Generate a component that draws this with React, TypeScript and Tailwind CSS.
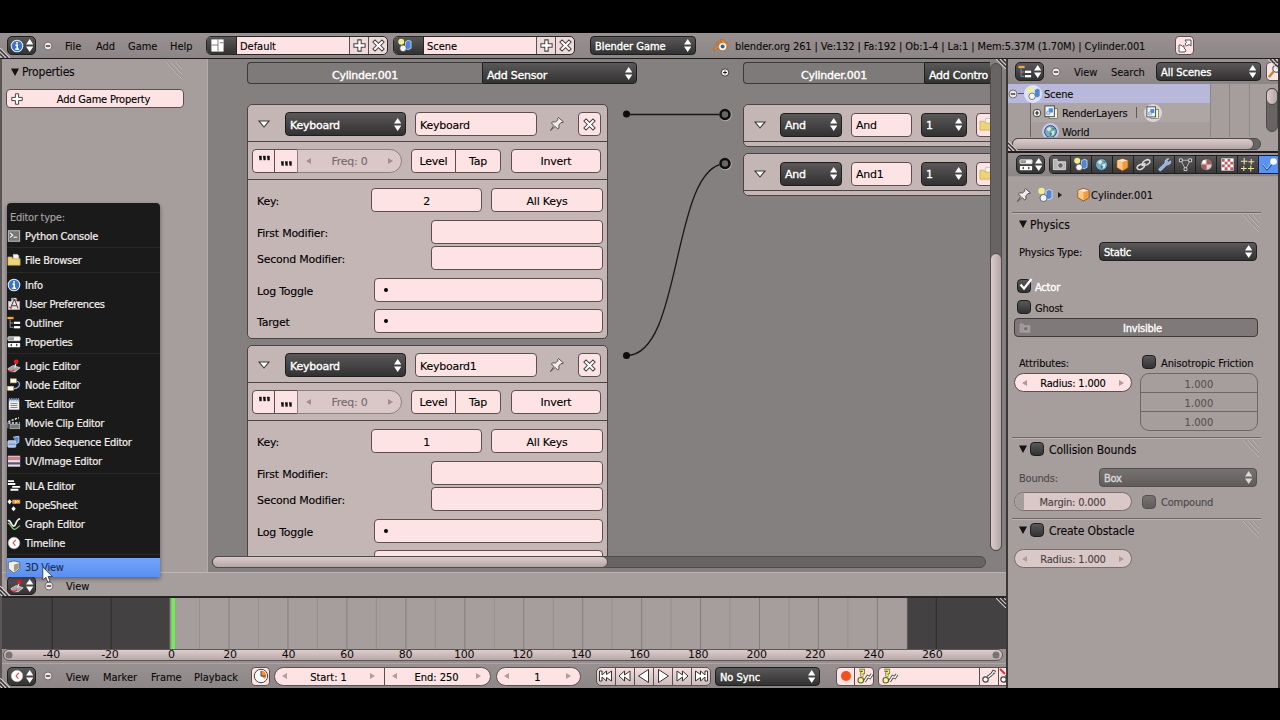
import type { ReactNode } from 'react';
import clsx from 'clsx';

const DARK = 'bg-linear-to-b from-[#5a5858] to-[#333232] border border-[#1f1e1e] text-white';
const PINK = 'bg-[#fde3e3] border border-[#5b4f4f] text-black';
const LOGIC_TEXT = "[font-family:'DejaVu_Sans',sans-serif] tracking-[-0.25px] [&_span]:pt-[2px]";
const HEADER_TEXT = 'tracking-[-0.03px] [&_span]:pt-[2px]';
const GLOW = '[-webkit-text-stroke:0.35px_#fff]';

const ICONS: Record<string, ReactNode> = {
  info: (
    <>
      <circle cx="8" cy="8" r="6.6" fill="#3b74c4" stroke="#e4eefb" strokeWidth="1.2" />
      <path d="M8 3.4v2M6.3 7h1.9v4.6M6 11.7h4.2" stroke="#fff" strokeWidth="1.8" fill="none" />
    </>
  ),
  console: (
    <>
      <rect x="1.5" y="2" width="13" height="12" fill="#777" stroke="#ccc" />
      <path d="M3.5 4.5l3 2.5-3 2.5M7.5 9.5h4" stroke="#fff" strokeWidth="1.2" fill="none" />
    </>
  ),
  folder: (
    <>
      <path d="M7 1.5h5l1.5 1.5v6H7z" fill="#f3f3ee" stroke="#aaa" strokeWidth=".6" />
      <path d="M1 4.5h4.5l1 2H15V14H1z" fill="#ecd37c" stroke="#c8a74a" strokeWidth=".7" />
    </>
  ),
  prefs: (
    <>
      <rect x="1.5" y="5" width="13" height="9.5" fill="#eadfe2" stroke="#b9a9ad" strokeWidth=".7" />
      <path d="M5 1h6v5H5z" fill="#eadfe2" />
      <path d="M4 13l3.5-9h1.7l3.3 9M5.5 10h5.5M6 2l4 1.5M11 1l1.5 2.5" stroke="#433" strokeWidth="1.1" fill="none" />
      <path d="M2.5 11.5l3 1.5" stroke="#d0405a" strokeWidth="1.3" />
    </>
  ),
  outliner: (
    <>
      <rect x=".5" y="1" width="7" height="2.6" fill="#f0a848" />
      <path d="M3.5 4v9h4M3.5 8h4" stroke="#8494b0" strokeWidth="1.1" fill="none" />
      <rect x="8" y="6.5" width="7" height="2.6" fill="#fff" />
      <rect x="8" y="11.5" width="7" height="2.6" fill="#fff" />
    </>
  ),
  properties: (
    <>
      <rect x="1" y="2" width="14" height="4.5" rx="1" fill="#999" stroke="#fff" strokeWidth=".8" />
      <rect x="8" y="2.5" width="6.5" height="3.5" fill="#fff" />
      <rect x="1" y="9" width="14" height="5" rx="1" fill="#fff" />
      <path d="M5.5 9.8L3.5 11.5l2 1.7zM10.5 9.8l2 1.7-2 1.7z" fill="#222" />
    </>
  ),
  logic: (
    <>
      <path d="M1 11l6-3.5 8 2.5-5.5 4.5H4z" fill="#aaa2a2" stroke="#eee" strokeWidth=".8" />
      <path d="M1 13l4 1.5 3-2" stroke="#c33" strokeWidth="1.4" fill="none" />
      <path d="M9 10l1.2-6" stroke="#ddd" strokeWidth="1.5" />
      <circle cx="10.5" cy="3.2" r="2.7" fill="#e2202a" />
    </>
  ),
  node: (
    <>
      <rect x="4" y="1" width="6.5" height="4.5" fill="#fff" stroke="#d8c48c" strokeWidth=".8" />
      <rect x=".8" y="9.5" width="6.5" height="4.5" fill="#fff" stroke="#d8c48c" strokeWidth=".8" />
      <path d="M10.5 3.500c5.500.5 5.500 8-3 8.700" stroke="#92abdc" strokeWidth="1.5" fill="none" />
    </>
  ),
  text: (
    <>
      <rect x="2" y="3" width="12" height="11.5" fill="#f2f2f2" />
      <path d="M3 1v4M5.5 1v4M8 1v4M10.5 1v4M13 1v4" stroke="#7c9ddb" strokeWidth="1.3" />
      <path d="M4 7.5h8M4 9.7h8M4 12h8" stroke="#777" strokeWidth="1" />
    </>
  ),
  clip: (
    <>
      <path d="M1.5 6.5L13.5 2" stroke="#eee" strokeWidth="1.6" strokeDasharray="2.5 1.5" />
      <path d="M1.5 8h13" stroke="#eee" strokeWidth="1.6" strokeDasharray="2.5 1.5" />
      <path d="M1 7v7" stroke="#6b93cf" strokeWidth="1.2" />
      <rect x="3.5" y="9.5" width="11" height="5" fill="#777" stroke="#b8c6bd" strokeWidth=".8" />
    </>
  ),
  sequence: (
    <>
      <path d="M7 2.5l6.5-1v7l-3 1.5" fill="#5c86c6" stroke="#c4daf6" strokeWidth="1" />
      <rect x="1" y="6.5" width="9" height="7.5" rx="1" fill="#a6c6f0" stroke="#dceafb" strokeWidth=".8" />
      <path d="M1.5 10.5h8" stroke="#5f87c4" />
    </>
  ),
  image: (
    <>
      <rect x="1" y="2" width="14" height="12.5" fill="#f1d9dd" />
      <rect x="1" y="3" width="14" height="4" fill="#cf7d88" />
      <rect x="1" y="9.5" width="14" height="2.5" fill="#4b5687" />
    </>
  ),
  nla: <path d="M1 2.5h7M1 5.7h8.5M6 9h9M4 12.3h9" stroke="#fff" strokeWidth="2.1" />,
  dope: (
    <>
      <rect x="6" y="2" width="9" height="4.5" fill="#e79a3e" />
      <path d="M3 1.500l2.500 2.800L3 7 .5 4.300zM7.500 9.500l2.500 2.800-2.500 2.700L5 12.300z" fill="#fff" />
      <path d="M9 3l2 1.5L9 6M12 3l2 1.500" stroke="#fff" fill="none" />
    </>
  ),
  graph: (
    <>
      <path d="M1 4.500c3-2 4 6 6.500 6C11 11 9 3 15 2" stroke="#f2f2f2" strokeWidth="2" fill="none" />
      <path d="M1 7c3 0 4 6 7 7s4-3 7-4" stroke="#8ed07a" strokeWidth="1.3" fill="none" />
    </>
  ),
  clock: (
    <>
      <circle cx="8" cy="8" r="6.6" fill="#fff" stroke="#bbb" strokeWidth=".6" />
      <path d="M10 4.5L7 8l2.5 3" stroke="#d14b52" strokeWidth="1.3" fill="none" />
    </>
  ),
  view3d: (
    <>
      <path d="M1.5 2.5L8 1l6.500 1.500v7.500L8 15l-6.500-5z" fill="#f0efe4" stroke="#555" strokeWidth=".9" />
      <path d="M8 5.500l5.500-2v6L8 13.500z" fill="#9b998c" />
    </>
  ),
  scene: (
    <>
      <circle cx="4.5" cy="4" r="3.2" fill="#eeee8e" />
      <path d="M9 4l3-1.500 3 1v7.500l-3 1.500-3-1z" fill="#4e86d8" stroke="#dbe8fa" strokeWidth=".8" />
      <circle cx="6.5" cy="11" r="3.5" fill="#f4f4f4" stroke="#444" strokeWidth=".7" />
    </>
  ),
  layers: (
    <>
      <rect x="5.5" y="4" width="9" height="10.5" fill="#f6f3cf" stroke="#555" strokeWidth=".7" />
      <rect x="1" y="1" width="10" height="11.5" fill="#eef4fc" stroke="#333" strokeWidth=".9" />
      <path d="M5 3.5h4.500V8H5z" fill="#4b8be0" />
      <circle cx="4.5" cy="8.5" r="2" fill="#c6d7ec" stroke="#678" strokeWidth=".5" />
    </>
  ),
  world: (
    <>
      <circle cx="8" cy="8" r="6.3" fill="#79a9c9" stroke="#244456" strokeWidth=".9" />
      <path d="M3.5 5.5L7 3l2 2-2.500 3zM9 8l3.500-1-1 4.500-2.500 1z" fill="#d7ecd4" />
      <path d="M9 5l3-1 .5 2zM7 9l3 1-2 3z" fill="#3f8266" />
    </>
  ),
  camera: (
    <>
      <path d="M1.500 5V2.500h4V5H14.500v8.500h-13z" fill="#b9b4b4" stroke="#e3dfdf" strokeWidth=".9" />
      <circle cx="9" cy="9" r="3" fill="#666" stroke="#eee" strokeWidth=".9" />
    </>
  ),
  cube: (
    <>
      <path d="M8 1.500l6 2v8l-6 3.500-6-3.500v-8z" fill="#ef9d3c" stroke="#8d4b0c" strokeWidth=".8" />
      <path d="M2.500 3.800L8 5.500v8.500l-5.500-3z" fill="#fbc987" />
      <path d="M2.500 3.600L8 2l5.500 1.600L8 5.300z" fill="#ffe9c8" />
    </>
  ),
  link: (
    <g fill="none" stroke="#ddd" strokeWidth="1.6">
      <ellipse cx="5" cy="10.5" rx="4" ry="2.5" transform="rotate(-25 5 10.5)" />
      <ellipse cx="11" cy="5.8" rx="4" ry="2.5" transform="rotate(-25 11 5.8)" />
      <path d="M6 9.5l4-3" />
    </g>
  ),
  wrench: (
    <path
      d="M2 12.500L8.500 6.500C8 3.500 10 1.500 12.700 1.700L10.800 4l1.200 1.500 2.700-1.300c.3 2.800-1.700 4.500-4.300 4.300L4.500 14.500c-1.500 1-3.200-.5-2.500-2z"
      fill="#8fb4ea"
      stroke="#d0e0f5"
      strokeWidth=".6"
    />
  ),
  mesh: (
    <>
      <path d="M3 3.5h10L8 13z" stroke="#bbb" strokeWidth="1" fill="none" />
      <path d="M1.5 2h3v3h-3zM11.5 2h3v3h-3zM6.5 11.5h3v3h-3z" fill="#222" stroke="#eee" strokeWidth=".9" />
    </>
  ),
  material: (
    <>
      <circle cx="8" cy="8" r="6" fill="#d9d0ce" stroke="#4b4444" strokeWidth=".7" />
      <path d="M8 8V2a6 6 0 0 1 6 6zM8 8v6a6 6 0 0 1-6-6z" fill="#a05f58" />
      <circle cx="5.5" cy="5" r="1.8" fill="#fff" />
    </>
  ),
  texture: (
    <>
      <rect x="1.5" y="1.5" width="13" height="13" fill="#fff" />
      <path
        d="M2 2h3v3H2zM8 2h3v3H8zM5 5h3v3H5zM11 5h3v3h-3zM2 8h3v3H2zM8 8h3v3H8zM5 11h3v3H5zM11 11h3v3h-3z"
        fill="#c25763"
      />
    </>
  ),
  particles: (
    <path
      d="M4.5 1v7M1 4.500h7M12 2v6M9 5h6M4 9.500v5.500M1 12.300h6M11.500 9v6.500M8.500 12.300h6.500"
      stroke="#efe7a4"
      strokeWidth="1.1"
    />
  ),
  physics: (
    <>
      <path d="M1 7.500l4 5 4.500-5" stroke="#2250a0" strokeWidth="1.8" fill="none" />
      <path d="M1 7l4 5 4.500-6" stroke="#b9d4ff" strokeWidth="1" fill="none" />
      <circle cx="11.5" cy="4.5" r="3.3" fill="#fff" />
    </>
  ),
  pin: (
    <path
      d="M9.500 1.500l5 4.500-1.500.7-1-.2-2.200 2.500.2 3-1.200 1-2.700-2.500-4.600 4 3.300-5L2.500 7l1-1.200 3 .2L9 3.700l-.3-1z"
      fill="#f4ecec"
      stroke="#4b4444"
      strokeWidth=".9"
    />
  ),
  screen: (
    <>
      <rect x="1.5" y="1.5" width="13" height="13" fill="#fff" />
      <path d="M8.500 1.500v13M8.500 7.500H1.500M10.500 5H14" stroke="#777" strokeWidth="1" />
    </>
  ),
  plus: <path d="M6.200 2h3.600v4.200H14v3.600H9.800V14H6.200V9.800H2V6.200h4.200z" fill="#fff" stroke="#4a4040" strokeWidth="1.1" />,
  cross: (
    <path
      d="M4.300 2L8 5.600 11.700 2 14 4.300 10.400 8 14 11.700 11.700 14 8 10.400 4.300 14 2 11.700 5.600 8 2 4.300z"
      fill="#fff"
      stroke="#4a4040"
      strokeWidth="1.1"
    />
  ),
  blender: (
    <>
      <path d="M1 11.500L7.500 6.500H3.500L4.500 4.800h5L7.500 3 9.500 2l5 4a4.800 4.600 0 1 1-9 4L3 12.500z" fill="#ea8a2c" stroke="#a9591a" strokeWidth=".5" />
      <circle cx="10" cy="9" r="3.4" fill="#fff" />
      <circle cx="10" cy="9" r="1.9" fill="#2d62a8" />
    </>
  ),
  fullscreen: (
    <>
      <path d="M2 7h2l1.500 1.500L7 7.500V10l2 2-1 2H2z" fill="#fff" stroke="#5b4f4f" strokeWidth="1" />
      <path d="M8 2h6v6l-2-1.500-2.500 1.500L8 6l1.500-1.500z" fill="#fff" stroke="#5b4f4f" strokeWidth="1" />
    </>
  ),
  magnifier: (
    <>
      <path d="M2 14l5-6" stroke="#c98436" strokeWidth="2.6" />
      <circle cx="10" cy="5" r="3.8" fill="#e9f2fb" stroke="#555" strokeWidth="1.2" />
    </>
  ),
  keying: (
    <>
      <path d="M3 2h4v2.500H5.500V8M7 5H5M7 7H5" stroke="#5c5c28" strokeWidth="2.6" fill="none" />
      <path d="M3 2h4v2.500H5.500V8M7 7H5" stroke="#eef07a" strokeWidth="1.3" fill="none" />
      <circle cx="4.5" cy="11.5" r="2.6" fill="#f4f59c" stroke="#5c5c28" strokeWidth="1" />
      <path d="M8 12.500l3-4.500 2 1 2-3" stroke="#5b4f4f" strokeWidth="3" fill="none" />
      <path d="M8 12.500l3-4.500 2 1 2-3" stroke="#fff" strokeWidth="1.2" fill="none" />
    </>
  ),
  key: (
    <>
      <path d="M6.500 9.500L11 6l1.500-2.500 2 1" stroke="#4a4040" strokeWidth="3.2" fill="none" />
      <path d="M6.500 9.500L11 6l1.500-2.500 2 1" stroke="#fff" strokeWidth="1.3" fill="none" />
      <circle cx="4.5" cy="11.5" r="2.7" fill="#fff" stroke="#4a4040" strokeWidth="1.2" />
    </>
  ),
  range: (
    <>
      <circle cx="8" cy="8" r="6.7" fill="#fff" stroke="#444" strokeWidth="1" />
      <path d="M8 2.500A5.500 5.500 0 0 1 13.500 8L12 11 8 8z" fill="#f0953a" />
      <path d="M8 3v5h4.500" stroke="#444" strokeWidth="1" fill="none" />
    </>
  ),
};

function Icon({ name, size = 15, className }: { name: string; size?: number; className?: string }) {
  return (
    <svg viewBox="0 0 16 16" width={size} height={size} className={clsx('shrink-0', className)}>
      {ICONS[name]}
    </svg>
  );
}

// Up/down arrows at the right end of every menu button
function Arrows({ size = 13, className }: { size?: number; className?: string }) {
  return (
    <svg viewBox="0 0 8 14" height={size} width={(size * 8) / 14} className={clsx('shrink-0', className)}>
      <path d="M4 0l4 6H0zM4 14l4-6H0z" fill="#fff" />
    </svg>
  );
}

function Triangle({ className }: { className?: string }) {
  return (
    <svg viewBox="0 0 8 8" width="8" height="8" className={clsx('shrink-0', className)}>
      <path d="M0 .5h8L4 8z" fill="#141212" />
    </svg>
  );
}

function Step({ flip }: { flip?: boolean }) {
  return (
    <svg viewBox="0 0 5 6" width="5" height="6" className={clsx('shrink-0 opacity-50', flip && 'rotate-180')}>
      <path d="M5 0v6L0 3z" fill="#6b5555" />
    </svg>
  );
}

function Grip({ className }: { className?: string }) {
  return (
    <svg viewBox="0 0 16 18" width="16" height="18" className={clsx('shrink-0', className)}>
      <path d="M0 0l16 17M5 0l11 12M10 0l6 7" stroke="#c3b9b9" strokeWidth="1" />
      <path d="M1 0l15 16M6 0l10 11M11 0l5 6" stroke="#8a8282" strokeWidth=".6" />
    </svg>
  );
}

// Area split widget, drawn for a top right corner
function Corner({ className }: { className?: string }) {
  return (
    <svg viewBox="0 0 10 10" width="10" height="10" className={clsx('absolute', className)}>
      <path d="M0 0l10 10M4 0l6 6M8 0l2 2" stroke="#d6cccc" strokeWidth="1.2" />
      <path d="M2 0l8 8M6 0l4 4" stroke="#333" strokeWidth="1.2" />
    </svg>
  );
}

function Collapse({ className }: { className?: string }) {
  return (
    <svg viewBox="0 0 10 10" width="10" height="10" className={clsx('shrink-0', className)}>
      <circle cx="5" cy="5" r="4" fill="#efe7e7" stroke="#6b6262" strokeWidth=".9" />
      <path d="M2.8 5h4.4" stroke="#2a2525" strokeWidth="1.3" />
    </svg>
  );
}

function EditorButton({ icon, className }: { icon: string; className?: string }) {
  return (
    <div className={clsx(DARK, 'flex h-[19px] w-[29px] shrink-0 items-center justify-between rounded-[5px] px-[2px]', className)}>
      <Icon name={icon} size={14} />
      <Arrows size={13} />
    </div>
  );
}

function Dropdown({ label, className }: { label: string; className?: string }) {
  return (
    <div className={clsx(DARK, 'flex shrink-0 items-center justify-between rounded-[4px] px-1', className)}>
      <span className={GLOW}>{label}</span>
      <Arrows />
    </div>
  );
}

function NumberField({ label, className }: { label: string; className?: string }) {
  return (
    <div className={clsx(PINK, 'flex shrink-0 items-center justify-between px-[7px]', className)}>
      <Step />
      <span>{label}</span>
      <Step flip />
    </div>
  );
}

function Checkbox({ checked, className }: { checked?: boolean; className?: string }) {
  return (
    <div className={clsx(DARK, 'size-[14px] shrink-0 rounded-[4px]', className)}>
      {checked && (
        <svg viewBox="0 0 14 14" className="-mt-[2px] ml-px size-[14px] overflow-visible">
          <path d="M1.500 6.500l3.500 4L12.500 1" stroke="#fff" strokeWidth="2.2" fill="none" />
        </svg>
      )}
    </div>
  );
}

function InfoHeader() {
  return (
    <header
      className={clsx(
        'relative flex h-[26px] items-center border-b border-[#1d1b1b] bg-linear-to-b from-[#999191] to-[#8d8686] pl-[7px]',
        HEADER_TEXT,
      )}
    >
      <EditorButton icon="info" />
      <Collapse className="ml-[7px]" />
      <span className="ml-[12px] w-[31px] shrink-0">File</span>
      <span className="w-[32px] shrink-0">Add</span>
      <span className="w-[42px] shrink-0">Game</span>
      <span className="w-[36px] shrink-0">Help</span>
      <IdBlock icon="screen" name="Default" className="w-[182px]" />
      <IdBlock icon="scene" name="Scene" className="ml-[5px] w-[182px]" />
      <Dropdown label="Blender Game" className="ml-[15px] h-[19px] w-[106px]" />
      <Icon name="blender" size={17} className="ml-[16px]" />
      <span className="ml-[6px] w-[440px] shrink-0 tracking-[-0.11px]">
        blender.org 261 | Ve:132 | Fa:192 | Ob:1-4 | La:1 | Mem:5.37M (1.70M) | Cylinder.001
      </span>
      <div className={clsx(PINK, 'flex h-[19px] w-[19px] items-center justify-center rounded-[4px]')}>
        <Icon name="fullscreen" size={16} />
      </div>
      <Corner className="bottom-0 left-0 rotate-180" />
    </header>
  );
}

function IdBlock({ icon, name, className }: { icon: string; name: string; className?: string }) {
  return (
    <div className={clsx('flex h-[19px] shrink-0 overflow-hidden rounded-[5px] border border-[#2b2626] bg-[#eedada]', className)}>
      <div className="flex w-[29px] items-center bg-linear-to-b from-[#5a5858] to-[#333232] pl-[3px]">
        <Icon name={icon} size={15} />
      </div>
      <div className="flex grow items-center border-l border-[#2b2626] bg-[#fde3e3] pl-[3px] text-black">
        <span>{name}</span>
      </div>
      <div className="flex w-[19px] items-center justify-center border-l border-[#5b4f4f]">
        <Icon name="plus" size={15} />
      </div>
      <div className="flex w-[19px] items-center justify-center border-l border-[#5b4f4f]">
        <Icon name="cross" size={15} />
      </div>
    </div>
  );
}

function PropertiesRegion() {
  return (
    <aside className="w-[206px] shrink-0 border-r border-[#b5abab] bg-[#a69d9d] pt-[4px]">
      <div className="flex h-[17px] items-center pl-[9px]">
        <Triangle />
        <span className="ml-[3px] w-[144px] text-[12px] tracking-[-0.2px]">Properties</span>
        <Grip className="-mt-px" />
      </div>
      <div className={clsx(PINK, 'mt-[9px] ml-[4px] flex h-[19px] w-[178px] items-center rounded-[4px]')}>
        <Icon name="plus" size={14} className="ml-[3px]" />
        <span className="grow pt-[2px] text-center">Add Game Property</span>
      </div>
    </aside>
  );
}

function LogicField({ children, className }: { children?: ReactNode; className?: string }) {
  return <div className={clsx(PINK, 'flex h-[24px] shrink-0 items-center rounded-[4px]', className)}>{children}</div>;
}

function PulseIcon({ low }: { low?: boolean }) {
  return (
    <svg viewBox="0 0 12 14" width="12" height="14">
      <path d={low ? 'M1 7.5h2.500v4h-2M5 7.500h2.500v4h-2M9 7.500h2.500v4h-2' : 'M1 2h2.500v4h-2M5 2h2.500v4h-2M9 2h2.500v4h-2'} fill="#111" stroke="#111" strokeWidth=".4" />
    </svg>
  );
}

function BrickToggle({ className }: { className?: string }) {
  return (
    <svg viewBox="0 0 12 8" width="12" height="8" className={clsx('shrink-0', className)}>
      <path d="M1 1h10L6 7z" fill="#fff" stroke="#3e3636" strokeWidth="1.1" />
    </svg>
  );
}

function SensorBrick({ name, keyName, target }: { name: string; keyName: string; target?: string }) {
  return (
    <section className="h-[235px] w-[361px] shrink-0 rounded-[5px] border border-[#4c4444] bg-[#c5b6b6] text-black">
      <div className="flex h-[37px] items-center border-b border-[#4c4444] pt-[2px] pl-[10px]">
        <BrickToggle />
        <Dropdown label="Keyboard" className="ml-[15px] h-[24px] w-[121px]" />
        <LogicField className="ml-[9px] w-[122px] pl-[4px]">
          <span>{name}</span>
        </LogicField>
        <Icon name="pin" size={16} className="ml-[12px]" />
        <LogicField className="ml-[13px] w-[23px] justify-center">
          <Icon name="cross" size={15} />
        </LogicField>
      </div>
      <div className="flex h-[38px] items-center border-b border-[#4c4444] pl-[4px]">
        <LogicField className="w-[23px] justify-center rounded-r-none">
          <PulseIcon />
        </LogicField>
        <LogicField className="-ml-px w-[24px] justify-center rounded-none">
          <PulseIcon low />
        </LogicField>
        <div className="-ml-px flex h-[24px] w-[105px] items-center justify-between rounded-r-full border border-[#8d8080] bg-[#dac8c8] px-[8px] text-[#756b6b]">
          <Step />
          <span>Freq: 0</span>
          <Step flip />
        </div>
        <LogicField className="ml-[9px] w-[45px] justify-center rounded-r-none">
          <span>Level</span>
        </LogicField>
        <LogicField className="-ml-px w-[46px] justify-center rounded-l-none">
          <span>Tap</span>
        </LogicField>
        <LogicField className="ml-[10px] w-[90px] justify-center">
          <span>Invert</span>
        </LogicField>
      </div>
      <div className="pt-[8px] pl-[9px]">
        <div className="flex items-center">
          <span className="w-[114px]">Key:</span>
          <LogicField className="w-[111px] justify-center">
            <span>{keyName}</span>
          </LogicField>
          <LogicField className="ml-[9px] w-[112px] justify-center">
            <span>All Keys</span>
          </LogicField>
        </div>
        <div className="mt-[8px] flex items-center">
          <span className="w-[174px]">First Modifier:</span>
          <LogicField className="w-[172px]" />
        </div>
        <div className="mt-[2px] flex items-center">
          <span className="w-[174px]">Second Modifier:</span>
          <LogicField className="w-[172px]" />
        </div>
        <div className="mt-[8px] flex items-center">
          <span className="w-[117px]">Log Toggle</span>
          <LogicField className="w-[229px] pl-[9px]">
            <i className="size-[4px] rounded-full bg-black" />
          </LogicField>
        </div>
        <div className="mt-[7px] flex items-center">
          <span className="w-[117px]">{target}</span>
          <LogicField className="w-[229px] pl-[9px]">
            <i className="size-[4px] rounded-full bg-black" />
          </LogicField>
        </div>
      </div>
    </section>
  );
}

function ControllerBrick({ name }: { name: string }) {
  return (
    <section className="h-[43px] w-[361px] shrink-0 rounded-[5px] border border-[#4c4444] bg-[#c5b6b6] text-black">
      <div className="flex h-[37px] items-center border-b border-[#4c4444] pt-[3px] pl-[10px]">
        <BrickToggle />
        <Dropdown label="And" className="ml-[14px] h-[24px] w-[62px]" />
        <LogicField className="ml-[9px] w-[61px] pl-[4px]">
          <span>{name}</span>
        </LogicField>
        <Dropdown label="1" className="ml-[9px] h-[24px] w-[46px]" />
        <LogicField className="ml-[9px] w-[40px] pl-[2px]">
          <Icon name="folder" size={15} />
        </LogicField>
      </div>
    </section>
  );
}

function ColumnHeader({ label, className }: { label: string; className?: string }) {
  return (
    <div className={clsx('flex h-[22px] shrink-0 [&_span]:pt-[4px]', className)}>
      <div className="flex grow items-center justify-center rounded-l-[4px] border border-r-0 border-[#3d3939] bg-[#7f7a7a] text-white">
        <span className={GLOW}>Cylinder.001</span>
      </div>
      <Dropdown label={label} className="h-[22px] w-[155px] rounded-l-none" />
    </div>
  );
}

function Links() {
  return (
    <svg viewBox="-1 0 781 497" className="absolute top-0 left-0 h-[497px] w-[781px]">
      <g fill="none" stroke="#191717" strokeWidth="1.3">
        <path d="M418 55.500H516" />
        <path d="M418 296.500C474 296 462 108 516 104.500" />
      </g>
      <circle cx="417.5" cy="55" r="3.5" fill="#0e0d0d" />
      <circle cx="417.5" cy="296.5" r="3.5" fill="#0e0d0d" />
      {[55.5, 104.5].map((y) => (
        <g key={y}>
          <circle cx="516.5" cy={y + 0.5} r="6.2" fill="#b5adad" />
          <circle cx="516" cy={y} r="4.5" fill="#666" stroke="#0e0d0d" strokeWidth="2.6" />
        </g>
      ))}
      <circle cx="516" cy="13.5" r="3.7" fill="#fff" stroke="#333" strokeWidth="1" />
      <path d="M514 13.500h4M516 11.500v4" stroke="#222" strokeWidth="1" />
    </svg>
  );
}

function LogicEditor() {
  return (
    <section className="relative flex h-[539px] shrink-0 flex-col border-b-2 border-[#262424]">
      <div className="flex h-[513px]">
        <PropertiesRegion />
        <div className="flex w-[798px] flex-col bg-[#858080]">
          <div className="flex h-[497px]">
            <div className={clsx('relative flex w-[782px] overflow-hidden pl-[39px]', LOGIC_TEXT)}>
              <div className="flex w-[390px] shrink-0 flex-col pt-[3px]">
                <ColumnHeader label="Add Sensor" />
                <div className="mt-[20px] flex flex-col gap-[6px]">
                  <SensorBrick name="Keyboard" keyName="2" target="Target" />
                  <SensorBrick name="Keyboard1" keyName="1" />
                </div>
              </div>
              <div className="ml-[106px] flex w-[361px] shrink-0 flex-col pt-[3px]">
                <ColumnHeader label="Add Contro" className="w-[336px]" />
                <div className="mt-[20px] flex flex-col gap-[6px]">
                  <ControllerBrick name="And" />
                  <ControllerBrick name="And1" />
                </div>
              </div>
              <Links />
            </div>
            <div className="mt-[4px] flex h-[488px] w-[12px] flex-col justify-end rounded-full border border-[#4f4b4b] bg-[#686464]">
              <div className="-mx-px -mb-px h-[298px] rounded-full border border-[#4f4b4b] bg-linear-to-r from-[#dccbcb] to-[#b5a7a7]" />
            </div>
          </div>
          <div className="ml-[4px] h-[12px] w-[774px] rounded-full border border-[#4f4b4b] bg-[#686464]">
            <div className="-mt-px -ml-px h-[12px] w-[396px] rounded-full border border-[#4f4b4b] bg-linear-to-b from-[#dccbcb] to-[#b5a7a7]" />
          </div>
        </div>
      </div>
      <div className={clsx('flex h-[24px] items-center border-t border-[#bdb3b3] bg-[#a69d9d] pt-[2px] pl-[5px]', HEADER_TEXT)}>
        <EditorButton icon="logic" className="h-[18px] w-[28px]" />
        <Collapse className="ml-[8px]" />
        <span className="ml-[12px]">View</span>
      </div>
      <Corner className="top-0 right-0" />
      <Corner className="bottom-0 -left-[2px] rotate-180" />
    </section>
  );
}

const LABELS = [-40, -20, 0, 20, 40, 60, 80, 100, 120, 140, 160, 180, 200, 220, 240, 260];
const frameX = (frame: number) => 168.1 + 2.947 * frame;

function Timeline() {
  const ticks = Array.from({ length: 33 }, (_, i) => i * 10 - 50);
  return (
    <section className="relative flex h-[90px] shrink-0 flex-col bg-[#989090]">
      <svg viewBox="0 0 1004 51" className="h-[51px] w-[1004px] shrink-0">
        <rect width="1004" height="51" fill="#a69d9d" />
        <rect width="168" height="51" fill="#434141" />
        <rect x="905" width="99" height="51" fill="#434141" />
        {ticks.map((frame) => {
          const major = frame % 20 === 0;
          const outside = frame < 0 || frame > 250;
          if (outside && !major) return null;
          return (
            <path
              key={frame}
              d={`M${frameX(frame)} 0V51`}
              stroke={outside ? '#2f2d2d' : major ? '#857e7e' : '#978f8f'}
              strokeWidth="1"
            />
          );
        })}
        <rect x="169.5" width="3.5" height="51" fill="#6cf054" />
      </svg>
      <div className="ml-[1px] h-[12px] w-[1000px] rounded-full border border-[#5e5656] bg-linear-to-b from-[#ddcccc] to-[#b8a9a9]">
        <svg viewBox="0 0 998 10" className="block h-[10px] w-[998px] overflow-visible [font-family:'DejaVu_Sans',sans-serif]">
          <circle cx="5" cy="5" r="3.5" fill="#7b7373" />
          <circle cx="992" cy="5" r="3.5" fill="#7b7373" />
          {LABELS.map((n) => (
            <text
              key={n}
              x={n < 0 ? 164.5 + n * 2.927 : 167.5 + n * 2.926}
              y="8"
              fontSize="11"
              textAnchor="middle"
              fill="#0c0b0b"
            >
              {n}
            </text>
          ))}
        </svg>
      </div>
      <div
        className={clsx(
          'mt-[2px] flex h-[25px] items-center overflow-hidden border-t border-[#b0a6a6] bg-linear-to-b from-[#999191] to-[#8d8686] pl-[5px]',
          HEADER_TEXT,
        )}
      >
        <EditorButton icon="clock" />
        <Collapse className="ml-[7px]" />
        <span className="ml-[13px] w-[37px] shrink-0">View</span>
        <span className="w-[48px] shrink-0">Marker</span>
        <span className="w-[43px] shrink-0">Frame</span>
        <span className="w-[57px] shrink-0">Playback</span>
        <div className={clsx(PINK, 'flex h-[19px] w-[19px] shrink-0 items-center justify-center rounded-[4px]')}>
          <Icon name="range" size={16} />
        </div>
        <NumberField label="Start: 1" className="ml-[4px] h-[19px] w-[111px] rounded-l-full pr-[9px]" />
        <NumberField label="End: 250" className="-ml-px h-[19px] w-[107px] rounded-r-full pr-[9px]" />
        <NumberField label="1" className="ml-[5px] h-[19px] w-[85px] rounded-full pr-[9px]" />
        <Transport />
        <Dropdown label="No Sync" className="ml-[4px] h-[19px] w-[105px]" />
        <div className={clsx(PINK, 'ml-[16px] flex h-[19px] w-[38px] shrink-0 rounded-[4px]')}>
          <div className="flex w-[18px] items-center justify-center border-r border-[#5b4f4f]">
            <i className="size-[10px] rounded-full bg-[#f4501e]" />
          </div>
          <Icon name="keying" size={17} className="ml-px" />
        </div>
        <div className={clsx(PINK, 'ml-[4px] flex h-[19px] w-[140px] shrink-0 rounded-[4px]')}>
          <Icon name="keying" size={17} className="ml-[2px]" />
          <div className="ml-[81px] flex w-[20px] justify-center border-x border-[#5b4f4f]">
            <Icon name="key" size={16} />
          </div>
          <svg viewBox="0 0 16 16" width="16" height="16" className="shrink-0">
            {ICONS.key}
            <path d="M1 1l5 5" stroke="#d8343c" strokeWidth="2" />
          </svg>
        </div>
      </div>
      <Corner className="top-0 right-0" />
      <Corner className="bottom-0 -left-[2px] rotate-180" />
    </section>
  );
}

const TRANSPORT = [
  'M1.5 3v10h2.500V9l4.500 4V9.500l5 3.500V3l-5 3.500V3L4 7V3z',
  'M2 8l5.500-5v4L13 3v10L7.500 9v4z',
  'M2.5 8l10-6.500v13z',
  'M3.5 1.500l10 6.500-10 6.500z',
  'M14 8L8.500 3v4L3 3v10l5.500-4v4z',
  'M14.5 3v10H12V9l-4.500 4V9.500l-5 3.500V3l5 3.500V3L12 7V3z',
];

function Transport() {
  return (
    <div className="ml-[15px] flex h-[19px] w-[115px] shrink-0 overflow-hidden rounded-[5px] border border-[#5b4f4f] bg-linear-to-b from-[#f3dddd] to-[#cfbdbd]">
      {TRANSPORT.map((d) => (
        <div key={d} className="flex grow items-center justify-center border-r border-[#5b4f4f] last:border-r-0">
          <svg viewBox="0 0 16 16" width="16" height="16">
            <path d={d} fill="#fff" stroke="#3b3333" strokeWidth="1" strokeLinejoin="round" />
          </svg>
        </div>
      ))}
    </div>
  );
}

function Outliner() {
  return (
    <section className="relative flex h-[94px] shrink-0 flex-col overflow-hidden border-b-2 border-[#1d1b1b] bg-[#a69d9d]">
      <div className={clsx('flex h-[25px] items-center bg-linear-to-b from-[#999191] to-[#8d8686] pl-[7px]', HEADER_TEXT)}>
        <EditorButton icon="outliner" />
        <Collapse className="ml-[7px]" />
        <span className="ml-[13px] w-[37px] shrink-0">View</span>
        <span className="w-[45px] shrink-0">Search</span>
        <Dropdown label="All Scenes" className="h-[19px] w-[105px]" />
        <div className={clsx(PINK, 'ml-[5px] flex h-[19px] w-[30px] shrink-0 items-center rounded-[4px]')}>
          <Icon name="magnifier" size={15} />
        </div>
      </div>
      <div className="flex h-[53px] overflow-hidden [&_span]:pt-[2px]">
        <div className="flex h-[60px] w-[202px] shrink-0 flex-col">
          <div className="flex h-[19px] shrink-0 items-center bg-[#b8b8da]">
            <Collapse />
            <div className="h-px w-[6px] bg-[#555]" />
            <div className="flex size-[18px] items-center justify-center rounded-full bg-[#e2e2f4]">
              <Icon name="scene" size={15} />
            </div>
            <span className="ml-[2px]">Scene</span>
          </div>
          <div className="ml-[22px] flex h-[41px] flex-col border-l border-[#6b6464]">
            <div className="flex h-[19px] shrink-0 items-center bg-[#aea5a5]">
              <svg viewBox="0 0 10 10" width="10" height="10" className="ml-px">
                <circle cx="5" cy="5" r="3.8" fill="#fff" stroke="#333" strokeWidth=".9" />
                <path d="M2.8 5h4.4M5 2.8v4.4" stroke="#222" strokeWidth="1.2" />
              </svg>
              <Icon name="layers" size={15} className="ml-[2px]" />
              <span className="ml-[3px] w-[67px]">RenderLayers</span>
              <i className="ml-[7px] h-[11px] w-px bg-[#5f5858]" />
              <div className="ml-[7px] flex size-[18px] items-center justify-center rounded-full bg-[#dcd5dc]">
                <Icon name="layers" size={14} />
              </div>
            </div>
            <div className="flex h-[19px] shrink-0 items-center pl-[11px]">
              <div className="flex size-[17px] items-center justify-center rounded-full bg-[#c8c8ea]">
                <Icon name="world" size={15} />
              </div>
              <span className="ml-[3px]">World</span>
            </div>
          </div>
        </div>
        <div className="h-full w-[20px] border-x border-[#8e8686]" />
        <div className="h-full w-[20px] border-r border-[#8e8686]" />
        <div className="mt-[4px] ml-[16px] h-[44px] w-[12px] shrink-0 rounded-full border border-[#4f4b4b] bg-[#686464]">
          <div className="-mt-px -ml-px h-[17px] w-[12px] rounded-full border border-[#4f4b4b] bg-linear-to-r from-[#dccbcb] to-[#b5a7a7]" />
        </div>
      </div>
      <div className="mt-[1px] ml-[4px] h-[12px] w-[249px] rounded-full border border-[#4f4b4b] bg-[#686464]">
        <div className="-mt-px -ml-px h-[12px] w-[242px] rounded-full border border-[#4f4b4b] bg-linear-to-b from-[#dccbcb] to-[#b5a7a7]" />
      </div>
      <Corner className="bottom-0 left-0 rotate-180" />
      <Corner className="top-0 right-0" />
    </section>
  );
}

const TABS = ['camera', 'scene', 'world', 'cube', 'link', 'wrench', 'mesh', 'material', 'texture', 'particles'];

function PanelTitle({ title, checkbox }: { title: string; checkbox?: boolean }) {
  return (
    <div className="ml-[4px] flex h-[23px] w-[249px] items-center border-t border-[#6f6767] pl-[7px] shadow-[inset_0_1px_#bcb2b2]">
      <Triangle />
      {checkbox && <Checkbox className="ml-[3px]" />}
      <span className={clsx('grow pt-px text-[12px] text-[#080707]', checkbox ? 'ml-[5px] tracking-[-0.1px]' : 'ml-[3px] tracking-[0px]')}>
        {title}
      </span>
      <Grip className="mr-[2px]" />
    </div>
  );
}

function PropertiesEditor() {
  return (
    <section className="relative flex grow flex-col overflow-hidden bg-[#a69d9d]">
      <div className="flex h-[24px] shrink-0 items-center border-b border-[#a09898] bg-linear-to-b from-[#999191] to-[#8d8686] pl-[8px]">
        <EditorButton icon="properties" />
        <div className="ml-[4px] flex h-[19px] shrink-0 overflow-hidden rounded-l-[4px] border border-[#1f1e1e]">
          {TABS.map((tab) => (
            <div
              key={tab}
              className="flex w-[20.9px] shrink-0 items-center justify-center border-r border-[#1f1e1e] bg-linear-to-b from-[#5a5858] to-[#3a3939]"
            >
              <Icon name={tab} size={15} />
            </div>
          ))}
          <div className="flex w-[22px] shrink-0 items-center bg-[#5c93f2] pl-[3px]">
            <Icon name="physics" size={16} />
          </div>
        </div>
      </div>

      <div className="flex h-[35px] shrink-0 items-center pl-[8px]">
        <Icon name="pin" size={16} />
        <Icon name="scene" size={16} className="ml-[5px]" />
        <svg viewBox="0 0 4 6" width="4" height="6" className="ml-[5px]">
          <path d="M0 0l4 3-4 3z" fill="#222" />
        </svg>
        <Icon name="cube" size={15} className="ml-[14px]" />
        <span className="pt-[2px] tracking-[0px]">Cylinder.001</span>
      </div>

      <PanelTitle title="Physics" />
      <div className="mt-[7px] flex items-center pl-[11px] [&_span]:pt-[2px]">
        <span className="w-[80px]">Physics Type:</span>
        <Dropdown label="Static" className="h-[19px] w-[158px]" />
      </div>
      <div className="mt-[18px] flex h-[14px] items-center pl-[9px]">
        <Checkbox checked />
        <span className={clsx('ml-[4px] pt-[2px] text-white', GLOW)}>Actor</span>
      </div>
      <div className="mt-[7px] flex h-[14px] items-center pl-[9px]">
        <Checkbox />
        <span className="ml-[4px] pt-[2px]">Ghost</span>
      </div>
      <div className="mt-[4px] ml-[6px] flex h-[19px] w-[244px] shrink-0 items-center rounded-[4px] border border-[#3f3a3a] bg-[#7f7979] text-white">
        <Icon name="camera" size={12} className="ml-[4px] opacity-50" />
        <span className={clsx('grow pt-[2px] pr-[3px] text-center', GLOW)}>Invisible</span>
      </div>
      <div className="mt-[18px] flex h-[14px] items-center pl-[11px] [&_span]:pt-[2px]">
        <span className="w-[123px]">Attributes:</span>
        <Checkbox />
        <span className="ml-[5px] tracking-[-0.1px]">Anisotropic Friction</span>
      </div>
      <div className="mt-[4px] flex pl-[6px] [&_span]:pt-[2px]">
        <NumberField label="Radius: 1.000" className="h-[19px] w-[118px] rounded-full" />
        <div className="ml-[8px] flex h-[58px] w-[118px] flex-col divide-y divide-[#6f6767] rounded-[9px] border border-[#6f6767] text-[#5b5454] tracking-[0.1px]">
          <span className="flex grow items-center justify-center">1.000</span>
          <span className="flex grow items-center justify-center">1.000</span>
          <span className="flex grow items-center justify-center">1.000</span>
        </div>
      </div>

      <div className="mt-[6px]">
        <PanelTitle title="Collision Bounds" checkbox />
      </div>
      <div className="mt-[8px] flex items-center pl-[11px] opacity-60 [&_span]:pt-[2px]">
        <span className="w-[80px]">Bounds:</span>
        <Dropdown label="Box" className="h-[19px] w-[158px]" />
      </div>
      <div className="mt-[5px] flex items-center pl-[6px] opacity-60 [&_span]:pt-[2px]">
        <div className={clsx(PINK, 'flex h-[19px] w-[118px] items-center justify-center overflow-hidden rounded-full')}>
          <div className="h-full w-[9px] bg-[#a69d9d]" />
          <span className="grow pr-[10px] text-center">Margin: 0.000</span>
        </div>
        <Checkbox className="ml-[10px]" />
        <span className="ml-[5px]">Compound</span>
      </div>

      <div className="mt-[7px]">
        <PanelTitle title="Create Obstacle" checkbox />
      </div>
      <div className="mt-[8px] pl-[6px] opacity-60 [&_span]:pt-[2px]">
        <NumberField label="Radius: 1.000" className="h-[19px] w-[118px] rounded-full" />
      </div>
    </section>
  );
}

const MENU = [
  [['console', 'Python Console']],
  [['folder', 'File Browser']],
  [['info', 'Info'], ['prefs', 'User Preferences'], ['outliner', 'Outliner'], ['properties', 'Properties']],
  [
    ['logic', 'Logic Editor'],
    ['node', 'Node Editor'],
    ['text', 'Text Editor'],
    ['clip', 'Movie Clip Editor'],
    ['sequence', 'Video Sequence Editor'],
    ['image', 'UV/Image Editor'],
  ],
  [['nla', 'NLA Editor'], ['dope', 'DopeSheet'], ['graph', 'Graph Editor'], ['clock', 'Timeline']],
  [['view3d', '3D View']],
];

function EditorMenu() {
  return (
    <div className="absolute top-[203px] left-[7px] flex h-[374px] w-[153px] flex-col rounded-t-[4px] bg-[#1b1a1a] pt-[4px] tracking-[-0.26px] text-[#f3eded] shadow-[0_2px_4px_#00000066] [&_span]:pt-px">
      <span className="flex h-[19px] items-center pl-[3px] text-[#aaa4a4]">Editor type:</span>
      {MENU.map((group, i) => (
        <div key={i} className={clsx(i > 0 && 'mt-[2px] border-t border-[#2a2929] pt-[2.5px]')}>
          {group.map(([icon, label]) => (
            <div
              key={label}
              className={clsx(
                'flex h-[19px] items-center',
                label === '3D View' && 'bg-linear-to-b from-[#74a4fa] to-[#5a8ff0] text-[#1c2c50]',
              )}
            >
              <Icon name={icon} size={14} />
              <span className={clsx('ml-[4px]', label !== '3D View' && '[-webkit-text-stroke:0.2px_#f3eded]')}>{label}</span>
            </div>
          ))}
        </div>
      ))}
    </div>
  );
}

export default function App() {
  return (
    <div className="relative h-[720px] w-[1280px] overflow-hidden bg-black pt-[33px] [font-family:'DejaVu_Sans_Condensed','DejaVu_Sans',sans-serif] text-[11px] leading-none tracking-[-0.2px] whitespace-nowrap text-[#0c0b0b] [-webkit-text-stroke:0.12px]">
      <InfoHeader />
      <div className="flex h-[629px]">
        <main className="flex w-[1006px] shrink-0 flex-col border-l-2 border-[#5b5656]">
          <LogicEditor />
          <Timeline />
        </main>
        <div className="flex w-[274px] flex-col border-r-2 border-l-2 border-[#3a3737]">
          <Outliner />
          <PropertiesEditor />
        </div>
      </div>
      <EditorMenu />
      <svg viewBox="0 0 12 18" className="absolute top-[566px] left-[42px] h-[18px] w-[12px]">
        <path d="M.8 1v13l3-2.700 2 5 2.300-1-2-4.800h4.200z" fill="#fff" stroke="#3a3a50" strokeWidth=".9" />
      </svg>
    </div>
  );
}
